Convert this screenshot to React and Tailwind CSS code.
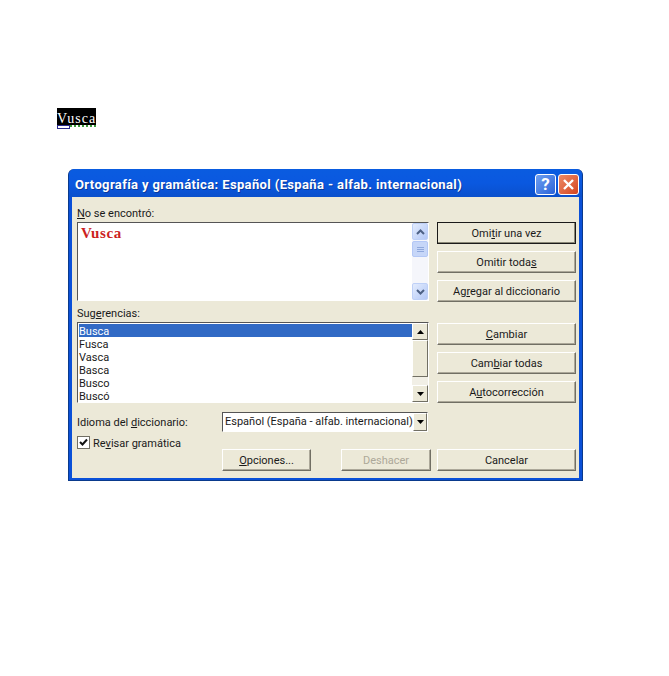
import React from 'react';

const suggestions = ['Busca', 'Fusca', 'Vasca', 'Basca', 'Busco', 'Buscó'];

// classic raised win9x style button, label may hold an underlined access key
const DlgButton = ({ children, className = '', isDefault = false, disabled = false }) => (
  <div
    className={`h-[22px] pt-[2px] flex items-center justify-center bg-[#ece9d8] text-[11px] border ${
      isDefault
        ? 'border-[#1a1a1a] shadow-[inset_-1px_-1px_0_#8a8876]'
        : 'border-t-white border-l-white border-r-[#716f64] border-b-[#716f64] shadow-[inset_-1px_-1px_0_#aca899]'
    } ${disabled ? 'text-[#aca899]' : 'text-[#1a1a1a]'} ${className}`}
  >
    <span>{children}</span>
  </div>
);

const ClassicArrow = ({ up = false, className = 'w-[16px] h-[17px]' }) => (
  <div className={`${className} shrink-0 bg-[#ece9d8] border border-t-white border-l-white border-r-[#716f64] border-b-[#716f64] flex items-center justify-center`}>
    <svg width="7" height="4" viewBox="0 0 7 4">
      <path d={up ? 'M3.5 0L7 4H0z' : 'M0 0h7L3.5 4z'} fill="#000" />
    </svg>
  </div>
);

const XpArrow = ({ up = false }) => (
  <div className="w-[16px] h-[17px] rounded-[2px] bg-gradient-to-br from-[#e3ecfd] to-[#b4c8f6] border border-[#bed0f7] flex items-center justify-center">
    <svg width="9" height="6" viewBox="0 0 9 6">
      <path d={up ? 'M1 5l3.5-3.5L8 5' : 'M1 1l3.5 3.5L8 1'} fill="none" stroke="#4d6185" strokeWidth="2" />
    </svg>
  </div>
);

export default function App() {
  return (
    <div className="w-[669px] h-[676px] bg-white overflow-hidden pt-[108px] font-['Roboto','Liberation_Sans',sans-serif]">
      {/* misspelled word in the document */}
      <div className="ml-[57px] w-[39px] h-[20px]">
        <div className="h-[17px] bg-black text-white font-['Liberation_Serif',serif] text-[14px] tracking-[1px] leading-[21px] text-center whitespace-nowrap overflow-hidden">
          Vusca
        </div>
        <div className="flex items-start">
          <div className="w-[13px] h-[4px] border border-[#2a2a8c] bg-white" />
          <div className="w-[26px] h-[2px] border-b-2 border-dotted border-[#3a9a3a]" />
        </div>
      </div>

      <div className="ml-[68px] mt-[41px] w-[515px] h-[312px] rounded-t-[6px] bg-[#0a50d8] px-[3px] border-x border-b border-[#0a3a8c]">
        {/* title bar */}
        <div className="h-[28px] -mx-[3px] pl-[6px] pr-[3px] pt-[3px] rounded-t-[6px] flex items-center justify-between bg-gradient-to-b from-[#0a5ce0] via-[#0a58e0] to-[#0a50cc]">
          <span className="text-white font-bold text-[13px] tracking-[0.37px] [text-shadow:1px_1px_0_#0a3a9c] whitespace-nowrap">
            Ortografía y gramática: Español (España - alfab. internacional)
          </span>
          <div className="flex gap-[2px] shrink-0">
            <div className="w-[21px] h-[21px] rounded-[3px] border border-white bg-gradient-to-br from-[#6f9ff0] to-[#2a62d8] text-white font-bold text-[17px] leading-[19px] text-center">?</div>
            <div className="w-[21px] h-[21px] rounded-[3px] border border-white bg-gradient-to-br from-[#ec8a66] to-[#d4431c] flex items-center justify-center">
              <svg width="13" height="13" viewBox="0 0 13 13">
                <path d="M2 2l9 9M11 2l-9 9" stroke="#fff" strokeWidth="2.4" />
              </svg>
            </div>
          </div>
        </div>

        {/* dialog body */}
        <div className="h-[281px] bg-[#ece9d8] pl-[5px] pr-[3px] pt-[9px] text-[11px] text-[#1a1a1a] leading-[14px]">
          <div className="flex">
            <div className="w-[352px] shrink-0">
              <div className="h-[16px] pt-[1px]"><u>N</u>o se encontró:</div>
              <div className="h-[79px] flex border border-t-[#555] border-l-[#555] border-r-white border-b-white bg-white">
                <div className="flex-1 pl-[3px] pt-[1px] font-['Liberation_Serif',serif] font-bold text-[15px] leading-[18px] tracking-[0.6px] text-[#cc1f1f]">
                  Vusca
                </div>
                <div className="w-[16px] flex flex-col bg-[#f5f6fb]">
                  <XpArrow up />
                  <div className="h-[16px] mt-[1px] rounded-[2px] bg-[#c6d6f8] border border-[#b4c8f6] flex flex-col items-center justify-center gap-[1px]">
                    <div className="w-[7px] h-[1px] bg-[#8fa8dc]" />
                    <div className="w-[7px] h-[1px] bg-[#8fa8dc]" />
                    <div className="w-[7px] h-[1px] bg-[#8fa8dc]" />
                  </div>
                  <div className="flex-1" />
                  <XpArrow />
                </div>
              </div>

              <div className="h-[21px] pt-[6px]">Sug<u>e</u>rencias:</div>
              <div className="h-[81px] flex border border-t-[#555] border-l-[#555] border-r-white border-b-white bg-white">
                <div className="flex-1 pl-[1px] pt-[1px] overflow-hidden">
                  {suggestions.map((word, index) => (
                    <div
                      key={word}
                      className={`h-[13px] leading-[15px] ${index === 0 ? 'bg-[#316ac5] text-white' : ''}`}
                    >
                      {word}
                    </div>
                  ))}
                </div>
                <div className="w-[16px] flex flex-col bg-[#f1efe6]">
                  <ClassicArrow up />
                  <div className="h-[37px] bg-[#ece9d8] border border-t-white border-l-white border-r-[#716f64] border-b-[#716f64]" />
                  <div className="flex-1" />
                  <ClassicArrow />
                </div>
              </div>
            </div>

            <div className="ml-[8px] w-[139px] shrink-0 flex flex-col pt-[16px]">
              <DlgButton isDefault>Omi<u>t</u>ir una vez</DlgButton>
              <DlgButton className="mt-[7px]">Omitir toda<u>s</u></DlgButton>
              <DlgButton className="mt-[7px]">Ag<u>r</u>egar al diccionario</DlgButton>
              <DlgButton className="mt-[21px]"><u>C</u>ambiar</DlgButton>
              <DlgButton className="mt-[7px]">Cam<u>b</u>iar todas</DlgButton>
              <DlgButton className="mt-[7px]">A<u>u</u>tocorrección</DlgButton>
            </div>
          </div>

          <div className="flex items-center mt-[9px]">
            <div className="w-[145px] pt-[1px]">Idioma del <u>d</u>iccionario:</div>
            <div className="w-[206px] h-[20px] flex items-center justify-between border border-t-[#555] border-l-[#555] border-r-white border-b-white bg-white pl-[2px] whitespace-nowrap">
              <span>Español (España - alfab. internacional)</span>
              <ClassicArrow className="w-[14px] h-[18px]" />
            </div>
          </div>

          <div className="flex mt-[3px]">
            <div className="w-[145px] shrink-0 flex items-start gap-[3px] pt-[1px]">
              <div className="w-[13px] h-[13px] border border-[#716f64] bg-white flex items-center justify-center">
                <svg width="9" height="9" viewBox="0 0 9 9">
                  <path d="M1 4l2.5 2.5L8 1.5" fill="none" stroke="#111" strokeWidth="2" />
                </svg>
              </div>
              <span className="whitespace-nowrap pt-[1px]">Re<u>v</u>isar gramática</span>
            </div>
            <div className="flex mt-[14px]">
              <DlgButton className="w-[89px]"><u>O</u>pciones...</DlgButton>
              <DlgButton className="w-[90px] ml-[30px]" disabled>Deshacer</DlgButton>
              <DlgButton className="w-[139px] ml-[6px]">Cancelar</DlgButton>
            </div>
          </div>
        </div>
      </div>
    </div>
  );
}
